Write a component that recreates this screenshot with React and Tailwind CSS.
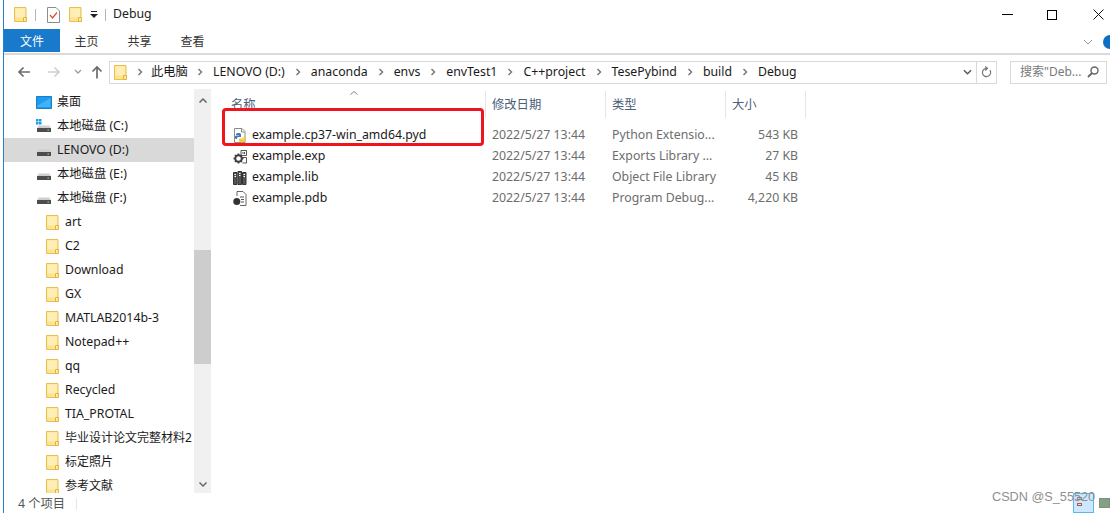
import React from "react";

const FONT = "[font-family:'Noto_Sans','Noto_Sans_CJK_SC',sans-serif]";

const crumbs = ["LENOVO (D:)", "anaconda", "envs", "envTest1", "C++project", "TesePybind", "build", "Debug"];

const folders = [
  { name: "art" },
  { name: "C2" },
  { name: "Download" },
  { name: "GX" },
  { name: "MATLAB2014b-3" },
  { name: "Notepad++" },
  { name: "qq" },
  { name: "Recycled" },
  { name: "TIA_PROTAL" },
  { name: "毕业设计论文完整材料2", cjk: true },
  { name: "标定照片", cjk: true },
  { name: "参考文献", cjk: true },
];

const drives = [
  { name: "本地磁盘 (C:)", win: true },
  { name: "LENOVO (D:)", active: true },
  { name: "本地磁盘 (E:)" },
  { name: "本地磁盘 (F:)" },
];

const files = [
  { name: "example.cp37-win_amd64.pyd", type: "Python Extensio...", size: "543 KB", icon: "py" },
  { name: "example.exp", type: "Exports Library ...", size: "27 KB", icon: "exp" },
  { name: "example.lib", type: "Object File Library", size: "45 KB", icon: "lib" },
  { name: "example.pdb", type: "Program Debug...", size: "4,220 KB", icon: "pdb" },
];

const FolderIcon = ({ className }) => (
  <svg viewBox="0 0 13 15" className={className}>
    <path d="M.5.5h11.5v14H.5z" fill="#fde28f" stroke="#e9c14f" />
    <path d="M1.5 1.5h9.5v9h-9.5z" fill="#ffeeb5" />
    <path d="M9.5 10.5h3v4h-3z" fill="#fde9a8" stroke="#e2b53c" />
  </svg>
);

const DriveIcon = ({ win }) => (
  <svg viewBox="0 0 16 14" className="w-4 h-[14px] shrink-0">
    {win && <path d="M0 0h2.5v2.5H0zM3 0h2.500v2.500H3zM0 3h2.500v2.500H0zM3 3h2.500v2.500H3z" fill="#1e9be8" />}
    <path d="M2.500 6.500h11L15 9.500H1z" fill="#cfcfcf" />
    <path d="M1 9h14v4H1z" fill="#4d4d4d" />
    <path d="M11.500 10.500H13v1.200h-1.500z" fill="#5fdc5f" />
  </svg>
);

const FileIcon = ({ kind }) => {
  if (kind === "py") {
    return (
      <svg viewBox="0 0 14 15" className="w-[14px] h-[15px] shrink-0">
        <path d="M1.500.5H9l3 3v11H1.500z" fill="#fff" stroke="#8a8a8a" />
        <path d="M8.500 1v3h3" fill="none" stroke="#8a8a8a" />
        <path d="M3 6.500C3 5.500 4 5 5.500 5S8 5.500 8 6.500V9H5.500C4.500 9 4 9.500 4 11H3C2 10.500 1.500 9.500 2 8.500 2.300 7.800 3 7.500 4 7.500h2V7H3z" fill="#3b7ab5" />
        <path d="M13 8.500c.5 1.500 0 3-1.500 3H9.500v.5H12c0 1.500-1 2.500-3 2.500s-3-1-3-2V10.500h3c1 0 1.500-.7 1.500-2z" fill="#f5c93a" />
      </svg>
    );
  }
  if (kind === "exp") {
    return (
      <svg viewBox="0 0 14 14" className="w-[14px] h-[14px] shrink-0">
        <path d="M8 .5h5.500v5H8z" fill="#fff" stroke="#555" />
        <path d="M10 2v2M11.500 2v2" stroke="#555" />
        <path d="M8.500 7.500h5v5.500h-4" fill="#fff" stroke="#555" />
        <circle cx="5.500" cy="8.500" r="3.300" fill="none" stroke="#3f3f3f" strokeWidth="2" />
        <path d="M5.500 3.500v2M5.500 11.500v2M.5 8.500h2M8.500 8.500h2M2 5l1.400 1.400M7.600 10.600 9 12M2 12l1.400-1.400M7.600 6.400 9 5" stroke="#3f3f3f" strokeWidth="1.500" />
      </svg>
    );
  }
  if (kind === "lib") {
    return (
      <svg viewBox="0 0 14 14" className="w-[14px] h-[14px] shrink-0">
        <path d="M.5 1.500H4v12H.5zM5 .5h3.500v13H5zM9.500 1.500H13v12H9.500z" fill="#555" stroke="#333" />
        <path d="M1.500 3.500H3M1.500 5.500H3M6 2.500h1.500M6 4.500h1.500M10.500 3.500H12M10.500 5.500H12" stroke="#fff" />
      </svg>
    );
  }
  return (
    <svg viewBox="0 0 14 15" className="w-[14px] h-[15px] shrink-0">
      <path d="M4 5V.5h6l3 3v11H7" fill="#fff" stroke="#666" />
      <path d="M7 6h4M8 8.500h3M8 11h3" stroke="#555" />
      <circle cx="3.800" cy="10.500" r="3.500" fill="#333" />
    </svg>
  );
};

const Chevron = ({ className = "" }) => (
  <svg viewBox="0 0 6 8" className={`w-[6px] h-2 shrink-0 ${className}`}>
    <path d="M1.500 1 4.500 4 1.500 7" fill="none" stroke="#7a7a7a" strokeWidth="1.500" />
  </svg>
);

const TitleBar = () => (
  <div className="h-[29px] flex items-center relative">
    <FolderIcon className="w-[13px] h-[15px] ml-[10px]" />
    <div className="w-px h-[12px] bg-[#b5b5b5] ml-[8px]" />
    <svg viewBox="0 0 13 16" className="w-[13px] h-4 ml-[11px]">
      <path d="M.5.5H9L12.500 4v11.500H.5z" fill="#fff" stroke="#8c8c8c" />
      <path d="M3 8l2.500 3L10 5.500" fill="none" stroke="#e2502a" strokeWidth="1.300" />
    </svg>
    <FolderIcon className="w-[13px] h-[15px] ml-[9px]" />
    <svg viewBox="0 0 8 8" className="w-2 h-2 ml-[8px]">
      <path d="M1 0h6v1H1zM0 3h8L4 7z" fill="#222" />
    </svg>
    <div className="w-px h-[12px] bg-[#b5b5b5] ml-[7px]" />
    <span className="ml-[7px] text-[12.3px] text-[#222]">Debug</span>
    <div className="ml-auto flex items-center mr-[6px]">
      <div className="w-[11px] h-px bg-black" />
      <div className="w-[10px] h-[10px] border border-black ml-[34px]" />
      <svg viewBox="0 0 11 11" className="w-[11px] h-[11px] ml-[36px]">
        <path d="M.5.5l10 10M10.500.5l-10 10" stroke="#111" strokeWidth="1" />
      </svg>
    </div>
  </div>
);

const Ribbon = () => (
  <div className="h-[26px] border-b-2 border-[#dadada] flex text-[12px] text-[#333]">
    <div className="w-[56px] h-[23px] pt-[2px] bg-[#1979ca] text-white flex items-center justify-center">文件</div>
    <div className="w-[53px] h-[23px] pt-[2px] flex items-center justify-center">主页</div>
    <div className="w-[53px] h-[23px] pt-[2px] flex items-center justify-center">共享</div>
    <div className="w-[53px] h-[23px] pt-[2px] flex items-center justify-center">查看</div>
    <div className="ml-auto flex items-start pt-[6px]">
      <svg viewBox="0 0 10 6" className="w-[10px] h-[6px] mr-[10px] mt-[4px]">
        <path d="M1 1l4 4 4-4" fill="none" stroke="#9a9a9a" />
      </svg>
      <div className="w-[7px] h-[14px] rounded-l-full bg-[#0d6fc4]" />
    </div>
  </div>
);

const AddressRow = () => (
  <div className="h-[34px] flex items-center">
    <svg viewBox="0 0 14 12" className="w-[14px] h-3 ml-[13px]">
      <path d="M13 6H2M6.500 1.500 2 6l4.500 4.500" fill="none" stroke="#6b6b6b" strokeWidth="1.700" />
    </svg>
    <svg viewBox="0 0 14 12" className="w-[14px] h-3 ml-[16px]">
      <path d="M1 6h11M7.500 1.500 12 6l-4.500 4.500" fill="none" stroke="#cfcfcf" strokeWidth="1.700" />
    </svg>
    <svg viewBox="0 0 8 6" className="w-2 h-[6px] ml-[13px]">
      <path d="M1 1l3 3 3-3" fill="none" stroke="#9a9a9a" strokeWidth="1.300" />
    </svg>
    <svg viewBox="0 0 12 14" className="w-3 h-[14px] ml-[9px]">
      <path d="M6 13.500V2M1.500 6.500 6 2l4.500 4.500" fill="none" stroke="#6b6b6b" strokeWidth="1.700" />
    </svg>
    <div className="w-[888px] h-[23px] ml-[6px] border border-[#d9d9d9] flex items-center text-[12.3px] text-[#1a1a1a]">
      <FolderIcon className="w-[13px] h-[15px] ml-[4px] shrink-0" />
      <Chevron className="ml-[10px]" />
      <span className="ml-[8px] w-[36px] whitespace-nowrap">此电脑</span>
      {crumbs.map((c) => (
        <React.Fragment key={c}>
          <Chevron className="mx-[10px]" />
          <span>{c}</span>
        </React.Fragment>
      ))}
      <svg viewBox="0 0 10 6" className="w-[9px] h-[6px] ml-auto">
        <path d="M1 1l4 4 4-4" fill="none" stroke="#555" strokeWidth="1.500" />
      </svg>
      <div className="w-px h-full bg-[#d9d9d9] ml-[4px]" />
      <svg viewBox="0 0 12 13" className="w-[11px] h-3 mx-[4px]">
        <path d="M9.800 4.500A4.500 4.500 0 1 1 6 2.500M4.500 .5 7 2.500 4.500 4.800" fill="none" stroke="#777" strokeWidth="1.300" />
      </svg>
    </div>
    <div className="w-[97px] h-[23px] ml-[13px] border border-[#d9d9d9] flex items-center text-[12px] text-[#7a7a7a]">
      <span className="ml-[9px]">搜索"Deb...</span>
      <svg viewBox="0 0 12 12" className="w-3 h-3 ml-auto mr-[7px]">
        <circle cx="7.500" cy="4.500" r="3.500" fill="none" stroke="#666" strokeWidth="1.400" />
        <path d="M5 7l-4 4" stroke="#666" strokeWidth="1.800" />
      </svg>
    </div>
  </div>
);

const Sidebar = () => (
  <div className="w-[207px] shrink-0 flex h-full">
    <div className="w-[190px] shrink-0 pt-[1px] text-[12.3px] leading-[12px] text-[#1a1a1a]">
      <div className="h-[24px] flex items-center pl-[32px]">
        <svg viewBox="0 0 16 13" className="w-4 h-[13px] shrink-0">
          <path d="M.5.500h15v12H.5z" fill="#1e9bf0" stroke="#1b7fc4" />
          <path d="M1.500 9.500 14.500 2v9h-13z" fill="#3fb3f7" />
        </svg>
        <span className="ml-[5px] text-[12px]">桌面</span>
      </div>
      {drives.map((d) => (
        <div key={d.name} className={`h-[24px] flex items-center pl-[32px] ${d.active ? "bg-[#d9d9d9]" : ""}`}>
          <DriveIcon win={d.win} />
          <span className="ml-[5px]">{d.name}</span>
        </div>
      ))}
      {folders.map((f) => (
        <div key={f.name} className="h-[24px] flex items-center pl-[42px]">
          <FolderIcon className="w-[13px] h-[15px] shrink-0" />
          <span className={`ml-[6px] whitespace-nowrap ${f.cjk ? "text-[12px]" : ""}`}>{f.name}</span>
        </div>
      ))}
    </div>
    <div className="w-[17px] shrink-0 bg-[#f0f0f0] flex flex-col items-center">
      <svg viewBox="0 0 8 5" className="w-2 h-[5px] mt-[9px]">
        <path d="M4 0 8 4 7 5 4 2 1 5 0 4z" fill="#606060" />
      </svg>
      <div className="w-full h-[114px] bg-[#cdcdcd] mt-[147px]" />
      <svg viewBox="0 0 8 5" className="w-2 h-[5px] mt-auto mb-[6px]">
        <path d="M4 5 8 1 7 0 4 3 1 0 0 1z" fill="#606060" />
      </svg>
    </div>
  </div>
);

const FileList = () => (
  <div className="flex-1 text-[12.3px]">
    <div className="h-[29px] pt-[2px] flex text-[#4c607a] relative">
      <svg viewBox="0 0 8 4" className="absolute left-[139px] top-[2px] w-2 h-1">
        <path d="M.5 3.500 4 .5l3.500 3" fill="none" stroke="#888" />
      </svg>
      <div className="w-[275px] pl-[20px] pt-[5px] border-r border-[#e5e5e5]">名称</div>
      <div className="w-[120px] pl-[6px] pt-[5px] border-r border-[#e5e5e5]">修改日期</div>
      <div className="w-[120px] pl-[6px] pt-[5px] border-r border-[#e5e5e5]">类型</div>
      <div className="w-[80px] pl-[6px] pt-[5px] border-r border-[#e5e5e5]">大小</div>
    </div>
    <div className="pt-[7px]">
      {files.map((f) => (
        <div key={f.name} className="h-[21px] flex items-center text-[#6d6d6d]">
          <div className="w-[274px] pl-[22px] flex items-center text-[#1a1a1a]">
            <FileIcon kind={f.icon} />
            <span className="ml-[5px]">{f.name}</span>
          </div>
          <div className="w-[120px] pl-[7px]">2022/5/27 13:44</div>
          <div className="w-[120px] pl-[7px] whitespace-nowrap">{f.type}</div>
          <div className="w-[80px] pr-[7px] text-right">{f.size}</div>
        </div>
      ))}
    </div>
  </div>
);

export default function App() {
  return (
    <div className={`w-[1110px] h-[513px] bg-white overflow-hidden relative pl-[3px] ${FONT}`}>
      <div className="h-full border-l border-[#2b7cc4] flex flex-col">
        <TitleBar />
        <Ribbon />
        <AddressRow />
        <div className="h-[404px] flex overflow-hidden">
          <Sidebar />
          <FileList />
        </div>
        <div className="h-[20px] pt-[2px] flex items-center text-[12.3px] text-[#555]">
          <span className="ml-[14px]">4 个项目</span>
          <div className="w-px h-[12px] bg-[#e5e5e5] ml-[11px]" />
        </div>
      </div>

      {/* red annotation over the first row */}
      <div className="absolute left-[222px] top-[108px] w-[262px] h-[38px] border-[3px] border-[#f0141e] rounded-[4px]" />

      {/* view toggles, partly under the watermark */}
      <div className="absolute left-[1073px] top-[493px] w-[21px] h-[20px] bg-[#cce8ff] border border-[#62b5e8] flex flex-col gap-[3px] pt-[3px] px-[3px]">
        <div className="h-[3px] w-[5px] border border-[#888]" />
        <div className="h-[3px] w-[5px] border border-[#c0504d]" />
      </div>
      <div className="absolute left-[1099px] top-[498px] w-[11px] h-[10px] border border-[#8a8a8a] bg-[#7fa37f]" />
      <div className="absolute left-[992px] top-[488px] text-[12.7px] text-[#8f8f8f] whitespace-nowrap [font-family:'Liberation_Sans',sans-serif]">CSDN @S_55520</div>
    </div>
  );
}
